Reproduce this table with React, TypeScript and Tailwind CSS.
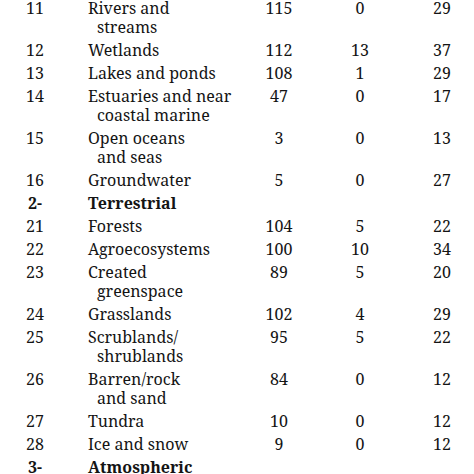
const rows: { id: string; name: string[]; a?: string; b?: string; c?: string; bold?: boolean }[] = [
  { id: '11', name: ['Rivers and', 'streams'], a: '115', b: '0', c: '29' },
  { id: '12', name: ['Wetlands'], a: '112', b: '13', c: '37' },
  { id: '13', name: ['Lakes and ponds'], a: '108', b: '1', c: '29' },
  { id: '14', name: ['Estuaries and near', 'coastal marine'], a: '47', b: '0', c: '17' },
  { id: '15', name: ['Open oceans', 'and seas'], a: '3', b: '0', c: '13' },
  { id: '16', name: ['Groundwater'], a: '5', b: '0', c: '27' },
  { id: '2-', name: ['Terrestrial'], bold: true },
  { id: '21', name: ['Forests'], a: '104', b: '5', c: '22' },
  { id: '22', name: ['Agroecosystems'], a: '100', b: '10', c: '34' },
  { id: '23', name: ['Created', 'greenspace'], a: '89', b: '5', c: '20' },
  { id: '24', name: ['Grasslands'], a: '102', b: '4', c: '29' },
  { id: '25', name: ['Scrublands/', 'shrublands'], a: '95', b: '5', c: '22' },
  { id: '26', name: ['Barren/rock', 'and sand'], a: '84', b: '0', c: '12' },
  { id: '27', name: ['Tundra'], a: '10', b: '0', c: '12' },
  { id: '28', name: ['Ice and snow'], a: '9', b: '0', c: '12' },
  { id: '3-', name: ['Atmospheric'], bold: true },
];

export default function App() {
  return (
    <div className="w-[474px] h-[474px] overflow-hidden bg-white text-[#141414] [font-family:'Noto_Serif','Liberation_Serif',serif] text-[16px] leading-[19px]">
      <div className="mt-[-3.5px]">
        {rows.map((r) => (
          <div
            key={r.id}
            className={`grid grid-cols-[70px_170px_78px_84px_72px] py-[2px] ${r.bold ? 'font-bold' : ''}`}
          >
            <div className="text-center">{r.id}</div>
            <div className="pl-[18px] whitespace-nowrap">
              <div>{r.name[0]}</div>
              {r.name[1] && <div className="pl-[9px]">{r.name[1]}</div>}
            </div>
            <div className="text-center">{r.a}</div>
            <div className="text-center">{r.b}</div>
            <div className="text-center pl-[8px]">{r.c}</div>
          </div>
        ))}
      </div>
    </div>
  );
}
